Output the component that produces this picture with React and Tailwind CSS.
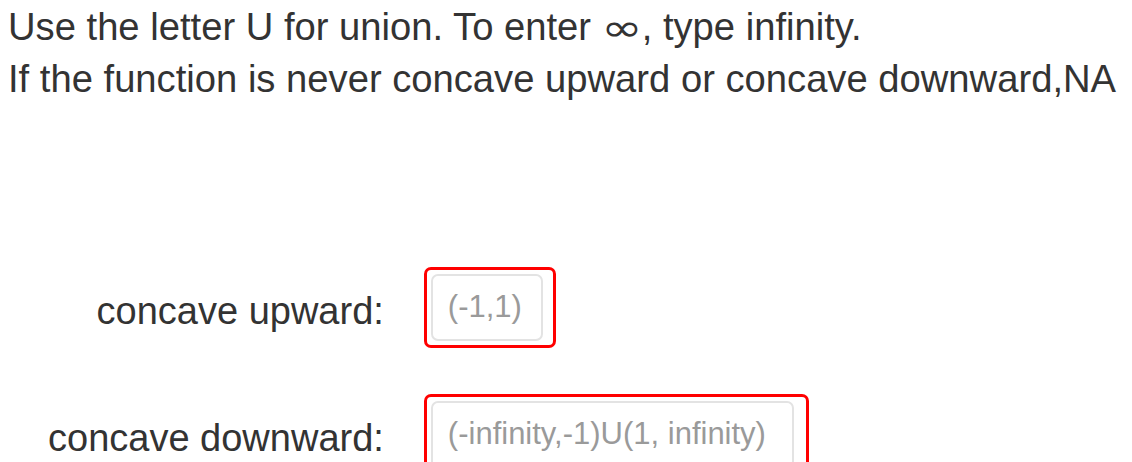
export default function App() {
  return (
    <div
      className="w-[1132px] h-[462px] overflow-hidden bg-white text-[#333] pl-[8px] pt-[1px]"
      style={{ fontFamily: '"Liberation Sans", Arial, sans-serif' }}
    >
      <div className="text-[38.2px] leading-[52px] whitespace-nowrap">
        <div>
          Use the letter U for union. To enter{" "}
          <span className="inline-block w-[40px] text-center">
            <span className="inline-block scale-x-[1.3] translate-y-[1px]" style={{ fontFamily: '"DejaVu Sans", sans-serif' }}>∞</span>
          </span>, type infinity.
        </div>
        <div>If the function is never concave upward or concave downward,NA</div>
      </div>

      <div className="mt-[162px] ml-[40px] grid grid-cols-[auto_auto] justify-start gap-x-[40px] gap-y-[46px] items-center">
        <div className="text-[38px] leading-none text-right pt-[6px]">concave upward:</div>
        <div className="flex">
          <div className="border-[3px] border-[#ff0000] rounded-[7px] pl-[4px] py-[4px] pr-[10px]">
            <div className="w-[112px] h-[67px] border-2 border-[#e3e3e3] rounded-[7px] flex items-center pl-[15px] text-[31px] text-[#9a9a9a] whitespace-nowrap">
              (-1,1)
            </div>
          </div>
        </div>
        <div className="text-[38px] leading-none text-right pt-[6px]">concave downward:</div>
        <div className="flex">
          <div className="border-[3px] border-[#ff0000] rounded-[7px] pl-[4px] py-[4px] pr-[12px]">
            <div className="w-[363px] h-[67px] border-2 border-[#e3e3e3] rounded-[7px] flex items-center pl-[15px] text-[31px] text-[#9a9a9a] whitespace-nowrap">
              (-infinity,-1)U(1, infinity)
            </div>
          </div>
        </div>
      </div>
    </div>
  );
}
